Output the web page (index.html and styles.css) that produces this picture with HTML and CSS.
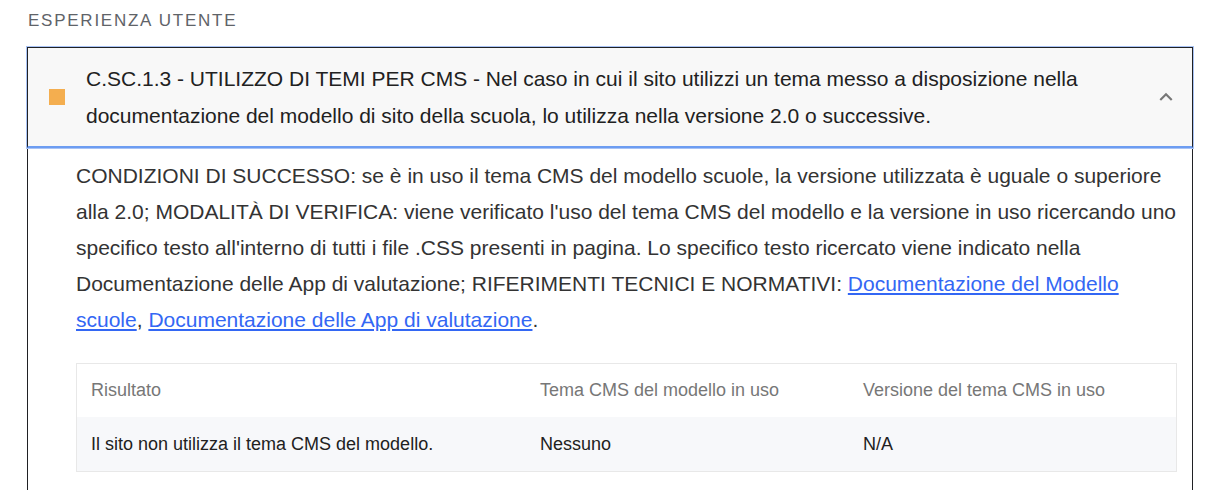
FILE: index.html
```html
<!DOCTYPE html>
<html lang="it">
<head>
<meta charset="utf-8">
<title>Esperienza utente</title>
<link rel="stylesheet" href="styles.css">
</head>
<body>
<div class="group">
  <h2 class="group-title">ESPERIENZA UTENTE</h2>
  <div class="audit">
    <div class="audit-header">
      <span class="audit-score"></span>
      <span class="audit-title">C.SC.1.3 - UTILIZZO DI TEMI PER CMS - Nel caso in cui il sito utilizzi un tema messo a disposizione nella documentazione del modello di sito della scuola, lo utilizza nella versione 2.0 o successive.</span>
      <svg class="audit-chevron" viewBox="0 0 24 24" width="26" height="26" aria-hidden="true"><path d="M12 8l-6 6 1.41 1.41L12 10.83l4.59 4.58L18 14z" fill="#777"/></svg>
    </div>
    <div class="audit-body">
      <p class="audit-desc">CONDIZIONI DI SUCCESSO: se è in uso il tema CMS del modello scuole, la versione utilizzata è uguale o superiore alla 2.0; MODALITÀ DI VERIFICA: viene verificato l'uso del tema CMS del modello e la versione in uso ricercando uno specifico testo all'interno di tutti i file .CSS presenti in pagina. Lo specifico testo ricercato viene indicato nella Documentazione delle App di valutazione; RIFERIMENTI TECNICI E NORMATIVI: <a href="#">Documentazione del Modello scuole</a>, <a href="#">Documentazione delle App di valutazione</a>.</p>
      <table class="details">
        <thead>
          <tr><th class="c1">Risultato</th><th class="c2">Tema CMS del modello in uso</th><th class="c3">Versione del tema CMS in uso</th></tr>
        </thead>
        <tbody>
          <tr><td>Il sito non utilizza il tema CMS del modello.</td><td>Nessuno</td><td>N/A</td></tr>
        </tbody>
      </table>
    </div>
  </div>
</div>
</body>
</html>
```

FILE: styles.css
```css
html, body {
  margin: 0;
  padding: 0;
  background: #fff;
}
body {
  font-family: "Liberation Sans", Arial, sans-serif;
  color: #212121;
  overflow: hidden;
}
.group {
  padding: 10px 0 0 27px;
  width: 1166px;
}
.group-title {
  margin: 0 0 17px 1px;
  font-size: 17px;
  font-weight: normal;
  letter-spacing: 1.75px;
  color: #5f6368;
  line-height: 21px;
}
.audit {
  border: 1px solid #202124;
  border-top: none;
  border-bottom: none;
  height: 443px;
  box-sizing: border-box;
}
.audit-header {
  display: flex;
  align-items: center;
  margin: -1px -1px 0;
  background: #f8f8f8;
  border: 1px solid #202124;
  border-bottom: 2px solid #6d9df2;
  outline: 1px solid #a9c3f5;
  padding: 12px 0 12px 21px;
}
.audit-score {
  flex: none;
  width: 16px;
  height: 16px;
  background: #f4ae4f;
  margin-right: 21px;
}
.audit-title {
  flex: 1;
  font-size: 21px;
  line-height: 37px;
  color: #212121;
}
.audit-chevron {
  flex: none;
  margin: 0 13px 0 20px;
}
.audit-body {
  padding: 0 15px 0 48px;
}
.audit-desc {
  margin: 10px 0 0;
  font-size: 21px;
  line-height: 36px;
  color: #333;
}
.audit-desc a {
  color: #3367f4;
}
.details {
  margin-top: 25px;
  width: 100%;
  border-collapse: collapse;
  border: 1px solid #e8e8e8;
  font-size: 18px;
}
.details th {
  font-weight: normal;
  text-align: left;
  color: #777;
  height: 53px;
  padding: 0 14px;
}
.details td {
  background: #f7f8fa;
  height: 54px;
  padding: 0 14px;
  color: #212121;
}
.details .c1 { width: 421px; }
.details .c2 { width: 295px; }
```
